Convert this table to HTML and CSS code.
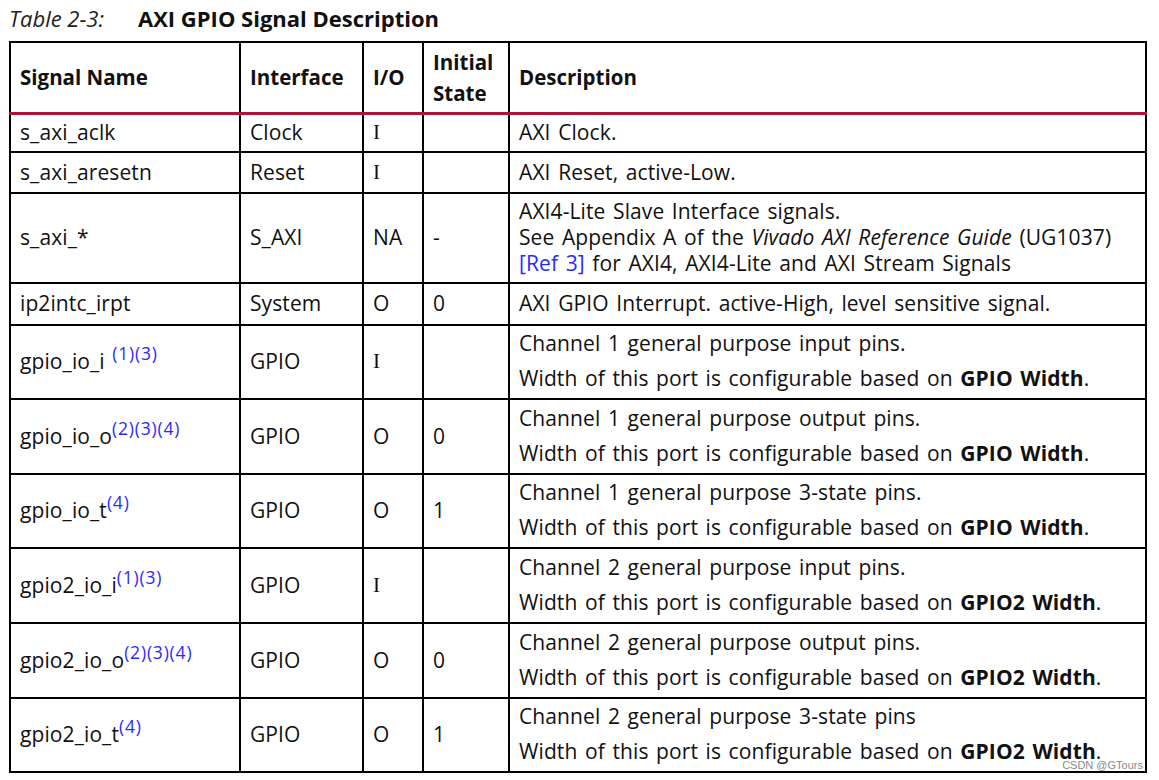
FILE: index.html
```html
<!DOCTYPE html>
<html>
<head>
<meta charset="utf-8">
<link rel="stylesheet" href="styles.css">
</head>
<body>
<div class="page">
  <div class="caption"><span class="cap-num">Table 2-3:</span><span class="cap-title">AXI GPIO Signal Description</span></div>
  <table class="sig">
    <colgroup>
      <col class="c1"><col class="c2"><col class="c3"><col class="c4"><col class="c5">
    </colgroup>
    <thead>
      <tr class="hdr">
        <th>Signal Name</th>
        <th>Interface</th>
        <th>I/O</th>
        <th class="two">Initial<br>State</th>
        <th>Description</th>
      </tr>
    </thead>
    <tbody>
      <tr class="r38"><td>s_axi_aclk</td><td>Clock</td><td class="io">I</td><td></td><td>AXI Clock.</td></tr>
      <tr class="r41"><td>s_axi_aresetn</td><td>Reset</td><td class="io">I</td><td></td><td>AXI Reset, active-Low.</td></tr>
      <tr class="r91"><td>s_axi_*</td><td>S_AXI</td><td>NA</td><td>-</td><td class="multi">AXI4-Lite Slave Interface signals.<br>See Appendix A of the <i>Vivado AXI Reference Guide</i> (UG1037)<br><span class="ref">[Ref 3]</span> for AXI4, AXI4-Lite and AXI Stream Signals</td></tr>
      <tr class="r42"><td>ip2intc_irpt</td><td>System</td><td>O</td><td>0</td><td>AXI GPIO Interrupt. active-High, level sensitive signal.</td></tr>
      <tr class="r73"><td>gpio_io_i <sup class="fn">(1)(3)</sup></td><td>GPIO</td><td class="io">I</td><td></td><td class="pair"><div>Channel 1 general purpose input pins.</div><div>Width of this port is configurable based on <b>GPIO Width</b>.</div></td></tr>
      <tr class="r75"><td>gpio_io_o<sup class="fn">(2)(3)(4)</sup></td><td>GPIO</td><td>O</td><td>0</td><td class="pair"><div>Channel 1 general purpose output pins.</div><div>Width of this port is configurable based on <b>GPIO Width</b>.</div></td></tr>
      <tr class="r74"><td>gpio_io_t<sup class="fn">(4)</sup></td><td>GPIO</td><td>O</td><td>1</td><td class="pair"><div>Channel 1 general purpose 3-state pins.</div><div>Width of this port is configurable based on <b>GPIO Width</b>.</div></td></tr>
      <tr class="r75"><td>gpio2_io_i<sup class="fn">(1)(3)</sup></td><td>GPIO</td><td class="io">I</td><td></td><td class="pair"><div>Channel 2 general purpose input pins.</div><div>Width of this port is configurable based on <b>GPIO2 Width</b>.</div></td></tr>
      <tr class="r75"><td>gpio2_io_o<sup class="fn">(2)(3)(4)</sup></td><td>GPIO</td><td>O</td><td>0</td><td class="pair"><div>Channel 2 general purpose output pins.</div><div>Width of this port is configurable based on <b>GPIO2 Width</b>.</div></td></tr>
      <tr class="r74"><td>gpio2_io_t<sup class="fn">(4)</sup></td><td>GPIO</td><td>O</td><td>1</td><td class="pair"><div>Channel 2 general purpose 3-state pins</div><div>Width of this port is configurable based on <b>GPIO2 Width</b>.</div></td></tr>
    </tbody>
  </table>
  <div class="watermark">CSDN @GTours</div>
</div>
</body>
</html>
```

FILE: styles.css
```css
html, body {
  margin: 0;
  padding: 0;
  background: #ffffff;
}

.page {
  position: relative;
  width: 1159px;
  height: 780px;
  padding: 3px 0 0 9px;
  box-sizing: border-box;
  font-family: "Open Sans", "Liberation Sans", sans-serif;
  color: #111;
}

.caption {
  height: 38px;
  font-size: 22px;
  line-height: 30px;
  display: flex;
  gap: 34px;
}

.cap-num {
  font-style: italic;
  color: #222;
}

.cap-title {
  font-weight: bold;
  color: #111;
}

.sig {
  border-collapse: collapse;
  table-layout: fixed;
  width: 1136px;
  font-size: 21px;
  letter-spacing: 0.1px;
  word-spacing: 2px;
}

.c1 { width: 230px; }
.c2 { width: 123px; }
.c3 { width: 60px; }
.c4 { width: 86px; }
.c5 { width: 637px; }

.sig th,
.sig td {
  border: 2px solid #000;
  padding: 0 0 0 9px;
  vertical-align: middle;
  text-align: left;
  white-space: nowrap;
}

.sig th {
  font-weight: bold;
  font-size: 20.5px;
  letter-spacing: 0;
  word-spacing: 0;
  height: 69px;
  border-bottom: 3px solid #b01238;
  line-height: 31px;
}

.sig td {
  line-height: 26px;
  padding-bottom: 2px;
}

.r38 td { height: 34px; }
.r41 td { height: 37px; }
.r91 td { height: 86px; }
.r42 td { height: 38px; }
.r73 td { height: 69px; }
.r74 td { height: 70px; }
.r75 td { height: 71px; }

.io {
  font-family: "Liberation Serif", serif;
  font-size: 21px;
}

.multi {
  line-height: 26.5px;
}

.pair div {
  line-height: 35px;
}

.ref {
  color: #2a2aff;
}

.fn {
  color: #2a2aff;
  font-size: 17.5px;
  letter-spacing: 0.8px;
  word-spacing: 0;
  vertical-align: 9px;
  line-height: 0;
}

.watermark {
  position: absolute;
  right: 16px;
  bottom: 9px;
  font-family: "Liberation Sans", sans-serif;
  font-size: 11px;
  line-height: 11px;
  color: #8a8a8a;
}
```
